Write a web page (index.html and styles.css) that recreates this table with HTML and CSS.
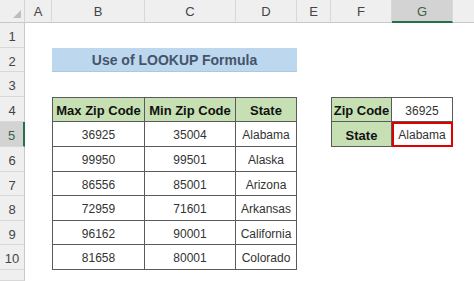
FILE: index.html
```html
<!DOCTYPE html>
<html>
<head>
<meta charset="utf-8">
<link rel="stylesheet" href="styles.css">
</head>
<body>
<div class="sheet">
  <!-- header row -->
  <div class="corner"><span class="tri"></span></div>
  <div class="ch">A</div>
  <div class="ch">B</div>
  <div class="ch">C</div>
  <div class="ch">D</div>
  <div class="ch">E</div>
  <div class="ch">F</div>
  <div class="ch sel">G</div>
  <div class="ch last"></div>

  <!-- row 1 -->
  <div class="rh">1</div>
  <div class="c fill8"></div>

  <!-- row 2 -->
  <div class="rh">2</div>
  <div class="c"></div>
  <div class="c title">Use of LOOKUP Formula</div>
  <div class="c fill4"></div>

  <!-- row 3 -->
  <div class="rh">3</div>
  <div class="c fill8"></div>

  <!-- row 4 -->
  <div class="rh">4</div>
  <div class="c"></div>
  <div class="c t th top left">Max Zip Code</div>
  <div class="c t th top">Min Zip Code</div>
  <div class="c t th top">State</div>
  <div class="c"></div>
  <div class="c t th top left">Zip Code</div>
  <div class="c t top">36925</div>
  <div class="c"></div>

  <!-- row 5 -->
  <div class="rh rsel">5</div>
  <div class="c"></div>
  <div class="c t left">36925</div>
  <div class="c t">35004</div>
  <div class="c t">Alabama</div>
  <div class="c"></div>
  <div class="c t th left">State</div>
  <div class="c t active">Alabama</div>
  <div class="c"></div>

  <!-- row 6 -->
  <div class="rh">6</div>
  <div class="c"></div>
  <div class="c t left">99950</div>
  <div class="c t">99501</div>
  <div class="c t">Alaska</div>
  <div class="c fill4"></div>

  <!-- row 7 -->
  <div class="rh">7</div>
  <div class="c"></div>
  <div class="c t left">86556</div>
  <div class="c t">85001</div>
  <div class="c t">Arizona</div>
  <div class="c fill4"></div>

  <!-- row 8 -->
  <div class="rh">8</div>
  <div class="c"></div>
  <div class="c t left">72959</div>
  <div class="c t">71601</div>
  <div class="c t">Arkansas</div>
  <div class="c fill4"></div>

  <!-- row 9 -->
  <div class="rh">9</div>
  <div class="c"></div>
  <div class="c t left">96162</div>
  <div class="c t">90001</div>
  <div class="c t">California</div>
  <div class="c fill4"></div>

  <!-- row 10 -->
  <div class="rh">10</div>
  <div class="c"></div>
  <div class="c t left">81658</div>
  <div class="c t">80001</div>
  <div class="c t">Colorado</div>
  <div class="c fill4"></div>

  <!-- row 11 -->
  <div class="rh"></div>
  <div class="c fill8"></div>
</div>
</body>
</html>
```
FILE: styles.css
```css
html, body {
  margin: 0;
  padding: 0;
  background: #ffffff;
}
body {
  width: 474px;
  height: 281px;
  overflow: hidden;
  font-family: "Liberation Sans", Arial, sans-serif;
}
.sheet {
  display: grid;
  grid-template-columns: 25px 27px 93px 91px 61px 34px 61px 61px 21px;
  grid-template-rows: 23px 25px 24px 25px 25px 25px 25px 24px 25px 24px 25px 11px;
  width: 474px;
  background: #ffffff;
}
.corner {
  background: #efefef;
  border-right: 1px solid #d4d4d4;
  border-bottom: 1px solid #c8c8c8;
  box-sizing: border-box;
  position: relative;
}
.tri {
  position: absolute;
  right: 3px;
  bottom: 4px;
  width: 0;
  height: 0;
  border-left: 8px solid transparent;
  border-bottom: 8px solid #bdbdbd;
}
.ch {
  background: #efefef;
  border-right: 1px solid #d8d8d8;
  border-bottom: 1px solid #c8c8c8;
  box-sizing: border-box;
  display: flex;
  align-items: center;
  justify-content: center;
  font-size: 13px;
  color: #444444;
  padding-top: 1px;
}
.ch.last {
  border-right: none;
}
.ch.sel {
  background: #d3d3d3;
  border-bottom: 2px solid #217346;
  color: #3f5f4a;
}
.rh {
  grid-column: 1;
  background: #efefef;
  border-right: 1px solid #c8c8c8;
  border-bottom: 1px solid #d8d8d8;
  box-sizing: border-box;
  display: flex;
  align-items: center;
  justify-content: center;
  font-size: 13px;
  color: #444444;
  padding-top: 3px;
}
.rh.rsel {
  background: #d3d3d3;
  border-right: 2px solid #217346;
  color: #3f5f4a;
}
.c {
  box-sizing: border-box;
  display: flex;
  align-items: center;
  justify-content: center;
}
.fill8 { grid-column: span 8; }
.fill4 { grid-column: span 4; }
.title {
  grid-column: span 3;
  background: #bdd7ee;
  border-bottom: 1px solid #a9c8e6;
  color: #44546a;
  font-weight: bold;
  font-size: 14px;
  padding-top: 1px;
}
.t {
  border-right: 1.5px solid #5a5a5a;
  border-bottom: 1.5px solid #5a5a5a;
  font-size: 12px;
  color: #333333;
  padding-top: 2px;
}
.t.left { border-left: 1.5px solid #5a5a5a; }
.t.top { border-top: 1.5px solid #5a5a5a; }
.th {
  background: #c6e0b4;
  font-weight: bold;
  font-size: 13px;
  color: #111111;
}
.active {
  outline: 2.5px solid #e00000;
  outline-offset: -2px;
  position: relative;
  z-index: 1;
}
```
